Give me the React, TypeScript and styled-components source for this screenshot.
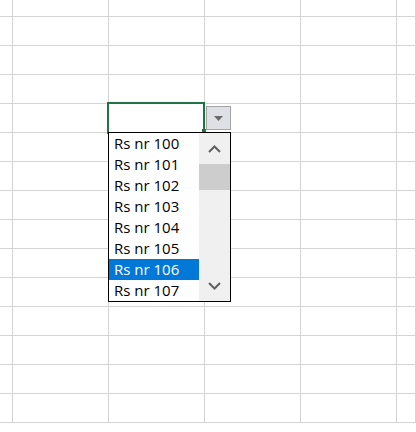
import styled, { createGlobalStyle } from "styled-components";

const GlobalStyle = createGlobalStyle`
  html, body {
    margin: 0;
    padding: 0;
    background: #ffffff;
  }
  body {
    font-family: "Open Sans", "Noto Sans", "Liberation Sans", sans-serif;
  }
`;

const ROWS = 15;
const COLS = 6;
const ACTIVE_ROW = 4;
const ACTIVE_COL = 2;

const items = [100, 101, 102, 103, 104, 105, 106, 107].map((n) => `Rs nr ${n}`);
const selected = "Rs nr 106";

const Sheet = styled.div`
  width: 416px;
  height: 432px;
  overflow: hidden;
  display: grid;
  grid-template-columns: 13px repeat(4, 96px) 1fr;
  grid-template-rows: 17px repeat(14, 29px);
  background: #ffffff;
`;

const Cell = styled.div<{ $active?: boolean }>`
  box-sizing: border-box;
  border-right: 1px solid #d4d4d4;
  border-bottom: 1px solid #d4d4d4;
  position: ${(p) => (p.$active ? "relative" : "static")};
  z-index: ${(p) => (p.$active ? 2 : "auto")};
`;

const ActiveFrame = styled.div`
  position: absolute;
  top: -2px;
  left: -2px;
  right: -1px;
  bottom: -2px;
  border: 2px solid #217346;
  pointer-events: none;
`;

const FillHandle = styled.div`
  position: absolute;
  right: -2px;
  bottom: -1px;
  width: 4px;
  height: 4px;
  background: #217346;
`;

const DropButton = styled.div`
  position: absolute;
  left: 97px;
  top: 2px;
  width: 25px;
  height: 24px;
  box-sizing: border-box;
  border: 1px solid #a3a3a8;
  background: #dfe0e5;
  display: flex;
  align-items: center;
  justify-content: center;
`;

const ListBox = styled.div`
  position: absolute;
  left: -1px;
  top: 28px;
  width: 123px;
  height: 170px;
  box-sizing: border-box;
  border: 1px solid #000000;
  background: #ffffff;
  display: flex;
  z-index: 3;
`;

const Items = styled.ul`
  margin: 0;
  padding: 0;
  list-style: none;
  width: 90px;
  display: flex;
  flex-direction: column;
`;

const Item = styled.li<{ $selected?: boolean }>`
  height: 21px;
  line-height: 21px;
  padding-left: 5px;
  font-size: 15px;
  white-space: nowrap;
  color: ${(p) => (p.$selected ? "#ffffff" : "#000000")};
  background: ${(p) => (p.$selected ? "#0078d7" : "transparent")};
`;

const ScrollBar = styled.div`
  flex: 1;
  background: #f0f0f0;
  display: flex;
  flex-direction: column;
`;

const ScrollArrow = styled.div`
  height: 31px;
  display: flex;
  align-items: center;
  justify-content: center;
`;

const Thumb = styled.div`
  height: 26px;
  background: #cdcdcd;
`;

const Track = styled.div`
  flex: 1;
`;

function Chevron({ up }: { up?: boolean }) {
  return (
    <svg width="13" height="8" viewBox="0 0 13 8">
      <polyline
        points={up ? "1,7 6.5,1.5 12,7" : "1,1 6.5,6.5 12,1"}
        fill="none"
        stroke="#606060"
        strokeWidth="2"
      />
    </svg>
  );
}

function DropDown() {
  return (
    <>
      <DropButton>
        <svg width="9" height="5" viewBox="0 0 9 5">
          <polygon points="0,0 9,0 4.5,5" fill="#6b6b6b" />
        </svg>
      </DropButton>
      <ListBox>
        <Items>
          {items.map((label) => (
            <Item key={label} $selected={label === selected}>
              {label}
            </Item>
          ))}
        </Items>
        <ScrollBar>
          <ScrollArrow>
            <Chevron up />
          </ScrollArrow>
          <Thumb />
          <Track />
          <ScrollArrow>
            <Chevron />
          </ScrollArrow>
        </ScrollBar>
      </ListBox>
    </>
  );
}

export default function App() {
  const cells = [];
  for (let r = 0; r < ROWS; r++) {
    for (let c = 0; c < COLS; c++) {
      const active = r === ACTIVE_ROW && c === ACTIVE_COL;
      cells.push(
        <Cell key={`${r}-${c}`} $active={active}>
          {active && (
            <>
              <ActiveFrame />
              <FillHandle />
              <DropDown />
            </>
          )}
        </Cell>
      );
    }
  }
  return (
    <>
      <GlobalStyle />
      <Sheet>{cells}</Sheet>
    </>
  );
}
